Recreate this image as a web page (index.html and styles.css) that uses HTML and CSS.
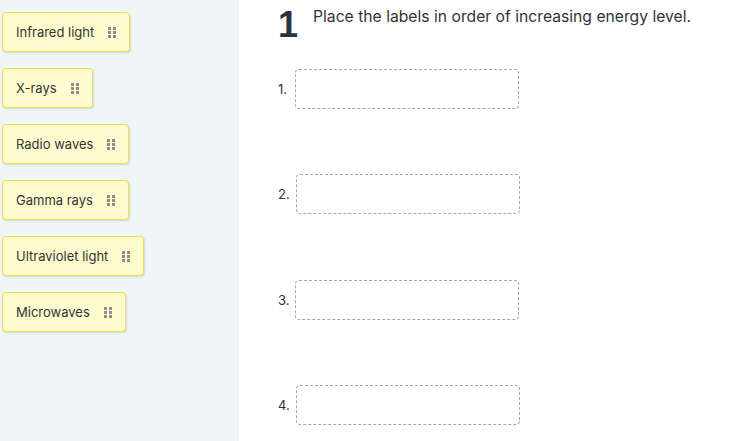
FILE: index.html
```html
<!DOCTYPE html>
<html>
<head>
<meta charset="utf-8">
<link rel="stylesheet" href="styles.css">
</head>
<body>
<div class="page">
  <aside class="bank">
    <div class="chip"><span class="chip-text">Infrared light</span><span class="grip"><i></i><i></i><i></i><i></i><i></i><i></i></span></div>
    <div class="chip"><span class="chip-text">X-rays</span><span class="grip"><i></i><i></i><i></i><i></i><i></i><i></i></span></div>
    <div class="chip"><span class="chip-text">Radio waves</span><span class="grip"><i></i><i></i><i></i><i></i><i></i><i></i></span></div>
    <div class="chip"><span class="chip-text">Gamma rays</span><span class="grip"><i></i><i></i><i></i><i></i><i></i><i></i></span></div>
    <div class="chip"><span class="chip-text">Ultraviolet light</span><span class="grip"><i></i><i></i><i></i><i></i><i></i><i></i></span></div>
    <div class="chip"><span class="chip-text">Microwaves</span><span class="grip"><i></i><i></i><i></i><i></i><i></i><i></i></span></div>
  </aside>
  <main class="question">
    <div class="q-head">
      <span class="q-num">1</span>
      <span class="q-text">Place the labels in order of increasing energy level.</span>
    </div>
    <ol class="slots">
      <li class="slot"><span class="slot-num">1.</span><span class="drop"></span></li>
      <li class="slot"><span class="slot-num">2.</span><span class="drop"></span></li>
      <li class="slot"><span class="slot-num">3.</span><span class="drop"></span></li>
      <li class="slot"><span class="slot-num">4.</span><span class="drop"></span></li>
    </ol>
  </main>
</div>
</body>
</html>
```

FILE: styles.css
```css
html, body {
  margin: 0;
  padding: 0;
  background: #ffffff;
  font-family: Inter, "Liberation Sans", sans-serif;
  color: #333333;
}
.page {
  display: flex;
  height: 441px;
  overflow: hidden;
}
.bank {
  width: 239px;
  flex: none;
  background: #eef6f6;
  box-sizing: border-box;
  padding: 12px 0 0 2px;
  display: flex;
  flex-direction: column;
  align-items: flex-start;
  gap: 16px;
}
.chip {
  height: 40px;
  box-sizing: border-box;
  display: flex;
  align-items: center;
  gap: 14px;
  padding: 0 13px 0 13px;
  background: #fffdd0;
  border: 1px solid #f7d955;
  border-radius: 4px;
  box-shadow: 1px 1px 2px rgba(0, 0, 0, 0.12);
  font-size: 13px;
  color: #333333;
}
.grip {
  display: grid;
  grid-template-columns: 3px 3px;
  grid-template-rows: 3px 3px 3px;
  gap: 1px 2px;
}
.grip i {
  display: block;
  background: #8c8c8c;
}
.question {
  flex: 1;
  padding: 7px 0 0 39px;
}
.q-head {
  display: flex;
  align-items: flex-start;
  gap: 15px;
}
.q-num {
  font-size: 36px;
  line-height: 36px;
  font-weight: 700;
  color: #2b323c;
  font-family: "Liberation Sans", sans-serif;
}
.q-text {
  font-size: 15.7px;
  line-height: 20px;
  color: #333333;
}
.slots {
  list-style: none;
  margin: 26px 0 0 0;
  padding: 0;
  display: flex;
  flex-direction: column;
  gap: 65.3px;
}
.slot {
  display: flex;
  align-items: center;
  gap: 6px;
}
.slot-num {
  font-size: 13px;
  color: #333333;
  min-width: 11px;
}
.drop {
  width: 224px;
  height: 40px;
  box-sizing: border-box;
  border: 1px dashed #a8a8a8;
  border-radius: 4px;
}
```
